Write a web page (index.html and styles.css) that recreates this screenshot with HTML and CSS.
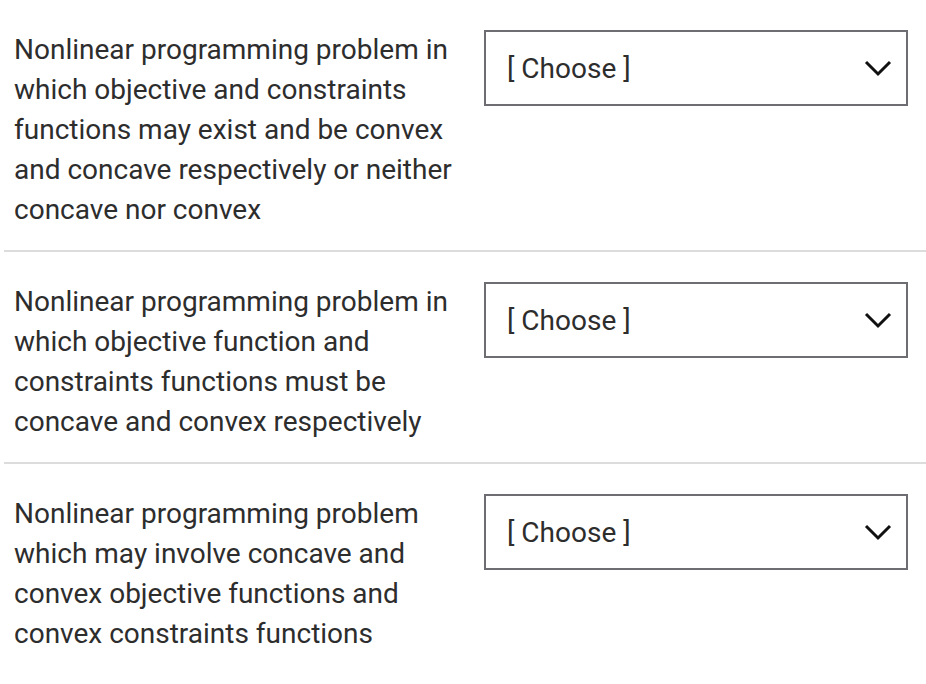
FILE: index.html
```html
<!DOCTYPE html>
<html>
<head>
<meta charset="utf-8">
<link rel="stylesheet" href="styles.css">
</head>
<body>
<div class="list">
  <div class="row">
    <div class="prompt">Nonlinear programming problem in which objective and constraints functions may exist and be convex and concave respectively or neither concave nor convex</div>
    <div class="select"><span class="label">[ Choose ]</span><svg class="chev" width="28" height="18" viewBox="0 0 28 18"><path d="M2 3 L14 15 L26 3" fill="none" stroke="#111" stroke-width="3"/></svg></div>
  </div>
  <div class="row">
    <div class="prompt">Nonlinear programming problem in which objective function and constraints functions must be concave and convex respectively</div>
    <div class="select"><span class="label">[ Choose ]</span><svg class="chev" width="28" height="18" viewBox="0 0 28 18"><path d="M2 3 L14 15 L26 3" fill="none" stroke="#111" stroke-width="3"/></svg></div>
  </div>
  <div class="row last">
    <div class="prompt">Nonlinear programming problem which may involve concave and convex objective functions and convex constraints functions</div>
    <div class="select"><span class="label">[ Choose ]</span><svg class="chev" width="28" height="18" viewBox="0 0 28 18"><path d="M2 3 L14 15 L26 3" fill="none" stroke="#111" stroke-width="3"/></svg></div>
  </div>
</div>
</body>
</html>
```
FILE: styles.css
```css
html, body {
  margin: 0;
  padding: 0;
  background: #fff;
}
body {
  font-family: Roboto, "Liberation Sans", sans-serif;
  color: #2d2d2d;
}
.list {
  padding-left: 4px;
}
.row {
  display: grid;
  grid-template-columns: 450px 424px;
  column-gap: 20px;
  align-items: start;
  padding: 30px 18px 20px 10px;
  border-bottom: 2px solid #dcdcdc;
}
.row.last {
  border-bottom: none;
}
.prompt {
  font-size: 28px;
  line-height: 40px;
}
.select {
  box-sizing: border-box;
  height: 76px;
  border: 2px solid #6e6e72;
  display: flex;
  align-items: center;
  justify-content: space-between;
  padding: 0 14px 0 21px;
  font-size: 28px;
  color: #2d2d2d;
}
.label {
  line-height: 40px;
  padding-top: 2px;
}
.chev {
  display: block;
}
```
